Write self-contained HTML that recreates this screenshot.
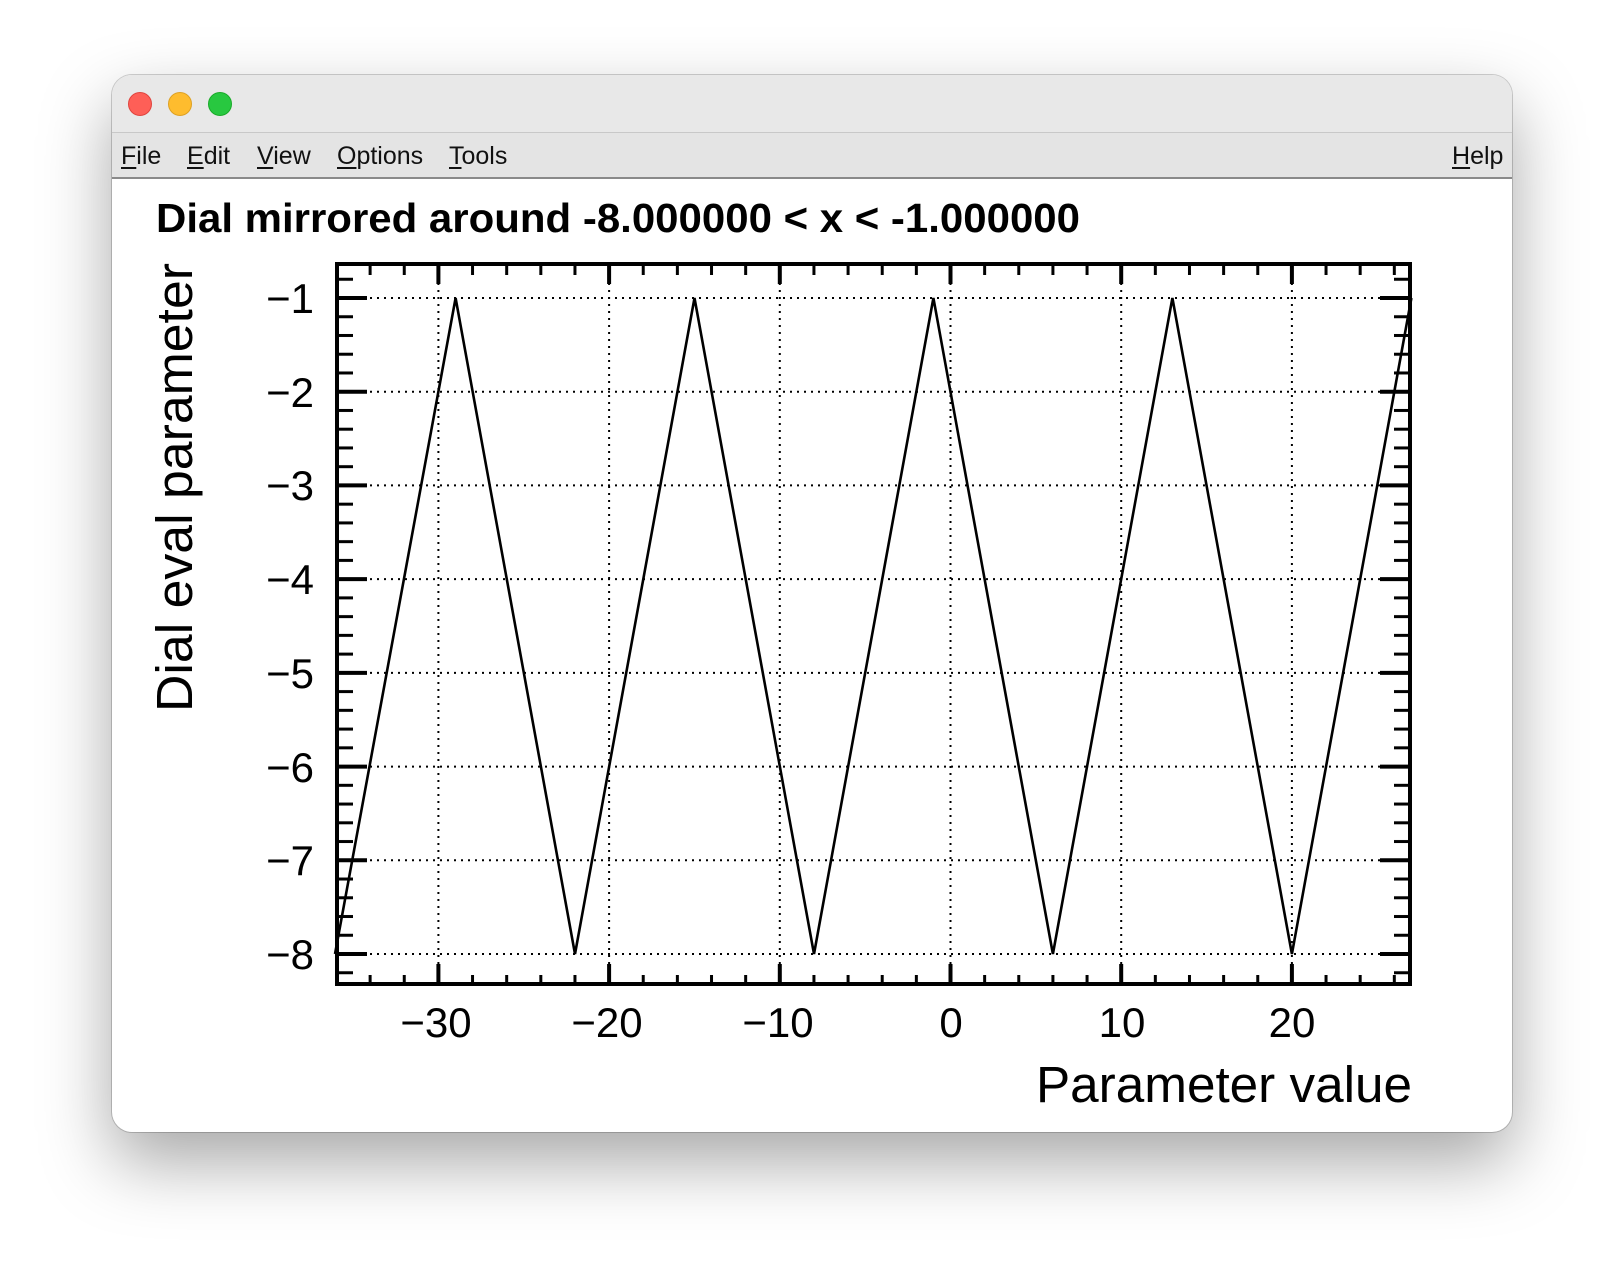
<!DOCTYPE html>
<html><head><meta charset="utf-8">
<style>
html,body{margin:0;padding:0;background:#fff;}
body{width:1624px;height:1280px;position:relative;overflow:hidden;font-family:"Liberation Sans",Arial,sans-serif;}
.win{position:absolute;left:112px;top:75px;width:1400px;height:1057px;border-radius:20px;background:#fff;
 box-shadow:0 30px 70px rgba(0,0,0,0.35),0 0 0 1px rgba(0,0,0,0.18);overflow:hidden;}
.tb{position:absolute;left:0;top:0;width:100%;height:57px;background:#e8e8e8;border-bottom:1px solid #c8c8c8;}
.dot{position:absolute;top:17px;width:24px;height:24px;border-radius:50%;}
.mb{position:absolute;left:0;top:58px;width:100%;height:44px;background:#e4e4e4;border-bottom:2px solid #8a8a8a;}
.mb span{position:absolute;top:9px;font-size:25px;color:#111;}
.mb u{text-decoration:underline;text-underline-offset:3px;}
svg{position:absolute;left:0;top:0;}
</style></head><body>
<div class="win">
 <div class="tb">
  <div class="dot" style="left:16px;background:#fe5f57;border:1px solid #e0443e;box-sizing:border-box"></div>
  <div class="dot" style="left:56px;background:#febc2e;border:1px solid #dea123;box-sizing:border-box"></div>
  <div class="dot" style="left:96px;background:#28c840;border:1px solid #1aab29;box-sizing:border-box"></div>
 </div>
 <div class="mb">
  <span style="left:9px"><u>F</u>ile</span>
  <span style="left:75px"><u>E</u>dit</span>
  <span style="left:145px"><u>V</u>iew</span>
  <span style="left:225px"><u>O</u>ptions</span>
  <span style="left:337px"><u>T</u>ools</span>
  <span style="left:1340px"><u>H</u>elp</span>
 </div>
</div>
<svg width="1624" height="1280" viewBox="0 0 1624 1280" xmlns="http://www.w3.org/2000/svg">
 <defs>
  <pattern id="ym" patternUnits="userSpaceOnUse" x="0" y="298" width="10" height="18.743">
   <rect x="0" y="-1.5" width="10" height="3" fill="#000"/>
   <rect x="0" y="17.243" width="10" height="3" fill="#000"/>
  </pattern>
  <pattern id="xm" patternUnits="userSpaceOnUse" x="950.5" y="0" width="34.14" height="10">
   <rect x="-1.5" y="0" width="3" height="10" fill="#000"/>
   <rect x="32.64" y="0" width="3" height="10" fill="#000"/>
  </pattern>
 </defs>
 <text x="156" y="232" font-size="41" font-weight="bold" textLength="924" lengthAdjust="spacingAndGlyphs">Dial mirrored around -8.000000 &lt; x &lt; -1.000000</text>
 <g stroke="#000" stroke-width="2" stroke-dasharray="2 5" fill="none">
  <path d="M335 298H1412M335 391.7H1412M335 485.4H1412M335 579.1H1412M335 672.9H1412M335 766.6H1412M335 860.3H1412M335 954H1412"/>
  <path d="M438.4 262V986M609.1 262V986M779.8 262V986M950.5 262V986M1121.2 262V986M1291.9 262V986"/>
 </g>
 <rect x="337" y="264" width="16" height="720" fill="url(#ym)"/>
 <rect x="1394" y="264" width="16" height="720" fill="url(#ym)"/>
 <rect x="337" y="264" width="1073" height="11" fill="url(#xm)"/>
 <rect x="337" y="975" width="1073" height="11" fill="url(#xm)"/>
 <g stroke="#000" stroke-width="4">
  <path d="M335 298h32M335 391.7h32M335 485.4h32M335 579.1h32M335 672.9h32M335 766.6h32M335 860.3h32M335 954h32"/>
  <path d="M1412 298h-32M1412 391.7h-32M1412 485.4h-32M1412 579.1h-32M1412 672.9h-32M1412 766.6h-32M1412 860.3h-32M1412 954h-32"/>
  <path d="M438.4 986v-22M609.1 986v-22M779.8 986v-22M950.5 986v-22M1121.2 986v-22M1291.9 986v-22"/>
  <path d="M438.4 262v22M609.1 262v22M779.8 262v22M950.5 262v22M1121.2 262v22M1291.9 262v22"/>
 </g>
 <polyline fill="none" stroke="#000" stroke-width="2.6" stroke-linejoin="miter"
  points="335,954 455.6,298 575,954 694.5,298 814,954 933.4,298 1052.9,954 1172.4,298 1291.9,954 1411.4,298"/>
 <rect x="337" y="264" width="1073" height="720" fill="none" stroke="#000" stroke-width="4"/>
 <g font-size="42" text-anchor="end">
  <text x="314" y="313">−1</text>
  <text x="314" y="407">−2</text>
  <text x="314" y="500">−3</text>
  <text x="314" y="594">−4</text>
  <text x="314" y="688">−5</text>
  <text x="314" y="782">−6</text>
  <text x="314" y="875">−7</text>
  <text x="314" y="969">−8</text>
 </g>
 <g font-size="42" text-anchor="middle">
  <text x="436" y="1037">−30</text>
  <text x="607" y="1037">−20</text>
  <text x="778" y="1037">−10</text>
  <text x="951" y="1037">0</text>
  <text x="1122" y="1037">10</text>
  <text x="1292" y="1037">20</text>
 </g>
 <text x="1036" y="1102" font-size="51" textLength="376" lengthAdjust="spacingAndGlyphs">Parameter value</text>
 <text transform="translate(192,712) rotate(-90)" font-size="51" textLength="449" lengthAdjust="spacingAndGlyphs">Dial eval parameter</text>
</svg>
</body></html>
